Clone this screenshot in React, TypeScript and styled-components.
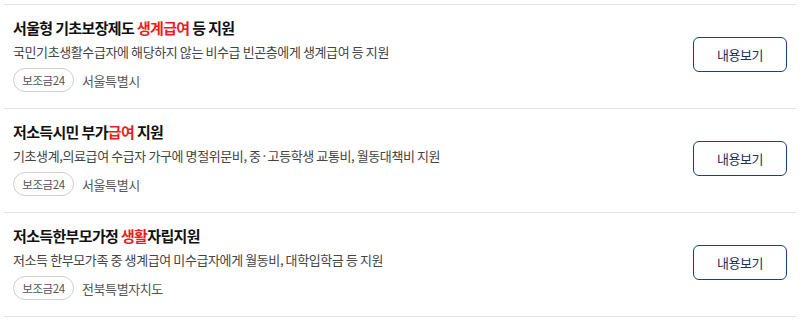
import React from "react";
import styled, { createGlobalStyle } from "styled-components";

const Global = createGlobalStyle`
  html, body { margin: 0; padding: 0; background: #fff; }
  body { font-family: "Noto Sans CJK KR", "Noto Sans", sans-serif; }
`;

const List = styled.ul`
  list-style: none;
  margin: 4px 10px 0 4px;
  padding: 0;
  border-bottom: 1px solid #e2e2e2;
`;

const Item = styled.li`
  display: flex;
  align-items: center;
  justify-content: space-between;
  border-top: 1px solid #e2e2e2;
  padding: 12px 9px 16px 9px;
`;

const Body = styled.div`
  display: flex;
  flex-direction: column;
`;

const Title = styled.h3`
  margin: 0;
  font-size: 15px;
  line-height: 22px;
  font-weight: 700;
  color: #111;
  letter-spacing: -0.65px;
`;

const Hl = styled.span`
  color: #ec1c24;
`;

const Desc = styled.p`
  margin: 4px 0 0;
  font-size: 13px;
  line-height: 18px;
  color: #444;
  letter-spacing: -0.4px;
`;

const Meta = styled.div`
  display: flex;
  align-items: center;
  gap: 8px;
  margin-top: 7px;
`;

const Pill = styled.span`
  display: inline-flex;
  align-items: center;
  justify-content: center;
  box-sizing: border-box;
  height: 24px;
  width: 61px;
  border: 1px solid #cfcfcf;
  border-radius: 12px;
  font-size: 11.5px;
  color: #555;
  letter-spacing: -0.4px;
`;

const Region = styled.span`
  font-size: 13px;
  color: #555;
  letter-spacing: -0.4px;
`;

const ViewButton = styled.button`
  box-sizing: border-box;
  width: 94px;
  height: 35px;
  border: 1px solid #1d3f7d;
  border-radius: 6px;
  background: #fff;
  color: #1c2d5a;
  font-family: inherit;
  font-size: 13px;
  letter-spacing: -0.5px;
  cursor: pointer;
  flex-shrink: 0;
`;

type Entry = {
  pre: string;
  hl: string;
  post: string;
  desc: string;
  region: string;
};

const data: Entry[] = [
  {
    pre: "서울형 기초보장제도 ",
    hl: "생계급여",
    post: " 등 지원",
    desc: "국민기초생활수급자에 해당하지 않는 비수급 빈곤층에게 생계급여 등 지원",
    region: "서울특별시",
  },
  {
    pre: "저소득시민 부가",
    hl: "급여",
    post: " 지원",
    desc: "기초생계,의료급여 수급자 가구에 명절위문비, 중·고등학생 교통비, 월동대책비 지원",
    region: "서울특별시",
  },
  {
    pre: "저소득한부모가정 ",
    hl: "생활",
    post: "자립지원",
    desc: "저소득 한부모가족 중 생계급여 미수급자에게 월동비, 대학입학금 등 지원",
    region: "전북특별자치도",
  },
];

export default function App() {
  return (
    <>
      <Global />
      <List>
        {data.map((d, i) => (
          <Item key={i}>
            <Body>
              <Title>
                {d.pre}
                <Hl>{d.hl}</Hl>
                {d.post}
              </Title>
              <Desc>{d.desc}</Desc>
              <Meta>
                <Pill>보조금24</Pill>
                <Region>{d.region}</Region>
              </Meta>
            </Body>
            <ViewButton>내용보기</ViewButton>
          </Item>
        ))}
      </List>
    </>
  );
}
